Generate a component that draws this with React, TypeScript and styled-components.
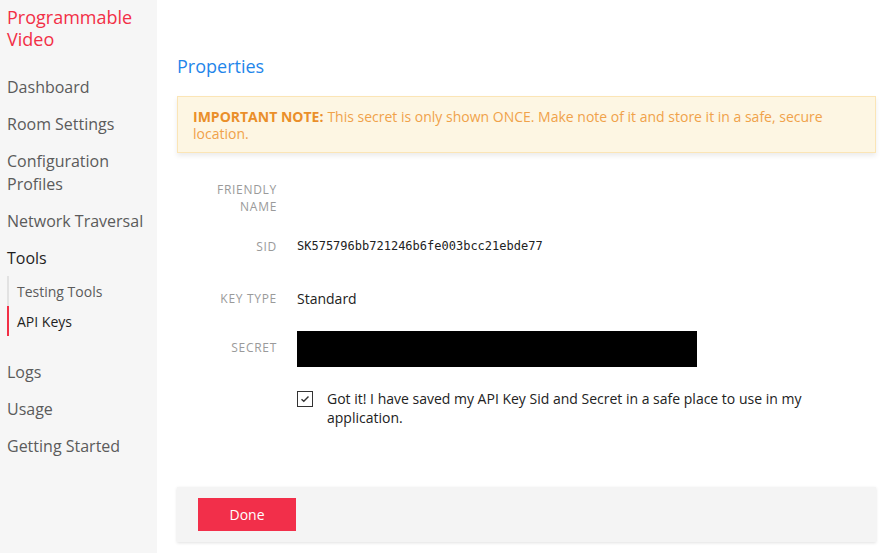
import React from "react";
import styled, { createGlobalStyle } from "styled-components";

const Global = createGlobalStyle`
  html, body { margin: 0; padding: 0; background: #ffffff; }
  body { font-family: "Open Sans", "DejaVu Sans", sans-serif; }
  * { box-sizing: border-box; }
`;

const Page = styled.div`
  display: flex;
  width: 884px;
  height: 553px;
  overflow: hidden;
`;

const Sidebar = styled.nav`
  width: 157px;
  flex: none;
  background: #f6f6f6;
  padding: 6px 0 0 7px;
`;

const Brand = styled.div`
  color: #f22f46;
  font-size: 18px;
  line-height: 22px;
  margin-bottom: 19px;
`;

const NavItem = styled.div<{ $active?: boolean }>`
  font-size: 16px;
  line-height: 23px;
  padding: ${(p) => (p.$active ? "7px 0 6px" : "7px 0")};
  color: ${(p) => (p.$active ? "#1f1f1f" : "#5b5b5b")};
`;

const SubList = styled.div`
  display: flex;
  flex-direction: column;
  margin-bottom: 18px;
`;

const SubItem = styled.div<{ $active?: boolean }>`
  height: 30px;
  display: flex;
  align-items: center;
  padding-left: 8px;
  border-left: 2px solid ${(p) => (p.$active ? "#f22f46" : "#e2e2e2")};
  font-size: 14px;
  color: ${(p) => (p.$active ? "#1f1f1f" : "#5b5b5b")};
`;

const Main = styled.main`
  flex: 1;
  padding: 54px 8px 0 20px;
  display: flex;
  flex-direction: column;
`;

const Title = styled.h2`
  margin: 0 0 18px;
  font-size: 18px;
  line-height: 24px;
  font-weight: 400;
  color: #1f86ea;
`;

const Note = styled.div`
  background: #fdf6e3;
  border: 1px solid #fbe5b6;
  padding: 11px 15px 10px;
  font-size: 14px;
  line-height: 17px;
  color: #f0a24a;
  box-shadow: 0 3px 5px rgba(0, 0, 0, 0.08);
`;

const NoteStrong = styled.strong`
  color: #ea8f2a;
  font-weight: 700;
  margin-right: 4px;
`;

const Fields = styled.div`
  display: flex;
  flex-direction: column;
`;

const Row = styled.div<{ $top: number }>`
  display: grid;
  grid-template-columns: 100px 1fr;
  column-gap: 20px;
  margin-top: ${(p) => p.$top}px;
`;

const Label = styled.div<{ $pad?: number }>`
  text-align: right;
  font-size: 12px;
  line-height: 17px;
  letter-spacing: 0.7px;
  text-transform: uppercase;
  color: #9a9a9a;
  padding-top: ${(p) => p.$pad ?? 0}px;
`;

const Value = styled.div`
  font-size: 14px;
  line-height: 17px;
  color: #222;
`;

const Mono = styled.div`
  font-family: "DejaVu Sans Mono", "Liberation Mono", monospace;
  font-size: 12px;
  line-height: 17px;
  color: #222;
`;

const Secret = styled.div`
  width: 400px;
  height: 36px;
  background: #000;
`;

const CheckRow = styled.label`
  grid-column: 2;
  display: flex;
  align-items: flex-start;
  gap: 14px;
  font-size: 14px;
  line-height: 19px;
  color: #222;
`;

const Box = styled.span`
  flex: none;
  width: 16px;
  height: 16px;
  margin-top: 2px;
  border: 1px solid #333;
  display: flex;
  align-items: center;
  justify-content: center;
`;

const Footer = styled.div`
  margin-top: 60px;
  background: #f4f4f4;
  padding: 11px 21px;
  box-shadow: 0 1px 3px rgba(0, 0, 0, 0.12);
`;

const DoneButton = styled.button`
  width: 98px;
  height: 33px;
  border: none;
  background: #f22f4a;
  color: #fff;
  font-family: inherit;
  font-size: 14px;
  cursor: pointer;
`;

export default function App() {
  return (
    <>
      <Global />
      <Page>
        <Sidebar>
          <Brand>
            Programmable
            <br />
            Video
          </Brand>
          <NavItem>Dashboard</NavItem>
          <NavItem>Room Settings</NavItem>
          <NavItem>
            Configuration
            <br />
            Profiles
          </NavItem>
          <NavItem>Network Traversal</NavItem>
          <NavItem $active>Tools</NavItem>
          <SubList>
            <SubItem>Testing Tools</SubItem>
            <SubItem $active>API Keys</SubItem>
          </SubList>
          <NavItem>Logs</NavItem>
          <NavItem>Usage</NavItem>
          <NavItem>Getting Started</NavItem>
        </Sidebar>
        <Main>
          <Title>Properties</Title>
          <Note>
            <NoteStrong>IMPORTANT NOTE:</NoteStrong>This secret is only shown
            ONCE. Make note of it and store it in a safe, secure location.
          </Note>
          <Fields>
            <Row $top={28}>
              <Label>
                Friendly
                <br />
                Name
              </Label>
              <Value />
            </Row>
            <Row $top={23}>
              <Label>SID</Label>
              <Mono>SK575796bb721246b6fe003bcc21ebde77</Mono>
            </Row>
            <Row $top={35}>
              <Label>Key Type</Label>
              <Value>Standard</Value>
            </Row>
            <Row $top={24}>
              <Label $pad={8}>Secret</Label>
              <Secret />
            </Row>
            <Row $top={22}>
              <CheckRow>
                <Box>
                  <svg width="10" height="8" viewBox="0 0 10 8">
                    <path
                      d="M1.5 4.2 L3.8 6.3 L8.5 1.5"
                      fill="none"
                      stroke="#333"
                      strokeWidth="1.4"
                    />
                  </svg>
                </Box>
                <span>
                  Got it! I have saved my API Key Sid and Secret in a safe place
                  to use in my application.
                </span>
              </CheckRow>
            </Row>
          </Fields>
          <Footer>
            <DoneButton>Done</DoneButton>
          </Footer>
        </Main>
      </Page>
    </>
  );
}
